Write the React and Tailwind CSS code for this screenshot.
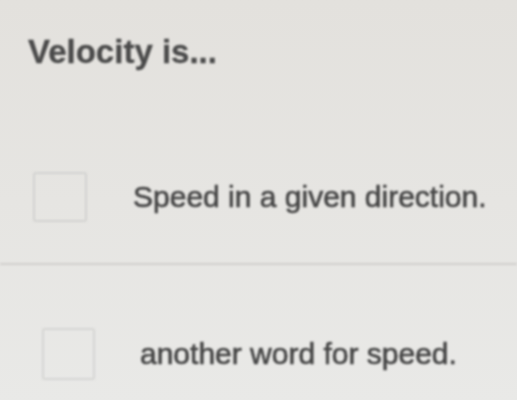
import React from "react";

const options = [
  { id: "a", label: "Speed in a given direction.", pad: "pl-[33px]" },
  { id: "b", label: "another word for speed.", pad: "pl-[42px]" },
];

export default function App() {
  return (
    <div
      className="w-[517px] h-[400px] overflow-hidden bg-gradient-to-b from-[#e3e1dd] to-[#e9e9e7] text-[#454545]"
      style={{ fontFamily: '"Liberation Sans", Arial, sans-serif' }}
    >
      <div className="blur-[0.8px]">
        {/* Question */}
        <div className="h-[130px] pt-[32px] pl-[28px]">
          <h1 className="text-[33px] leading-[40px] font-bold text-[#4a4a4a] [-webkit-text-stroke:0.3px_#4a4a4a]">Velocity is...</h1>
        </div>

        {/* Row 1 */}
        <div className={`h-[135px] flex items-center gap-[46px] border-b-2 border-[#d2d0cd] ${options[0].pad}`}>
          <span className="w-[54px] h-[50px] shrink-0 rounded-[3px] border-2 border-[#d3d3d1]" />
          <span className="text-[30px] leading-[36px] [-webkit-text-stroke:0.6px_#454545]">{options[0].label}</span>
        </div>

        {/* Row 2 */}
        <div className={`pt-[63px] flex items-center gap-[45px] ${options[1].pad}`}>
          <span className="w-[53px] h-[52px] shrink-0 rounded-[3px] border-2 border-[#d6d6d4]" />
          <span className="text-[30px] leading-[36px] [-webkit-text-stroke:0.6px_#454545]">{options[1].label}</span>
        </div>
      </div>
    </div>
  );
}
